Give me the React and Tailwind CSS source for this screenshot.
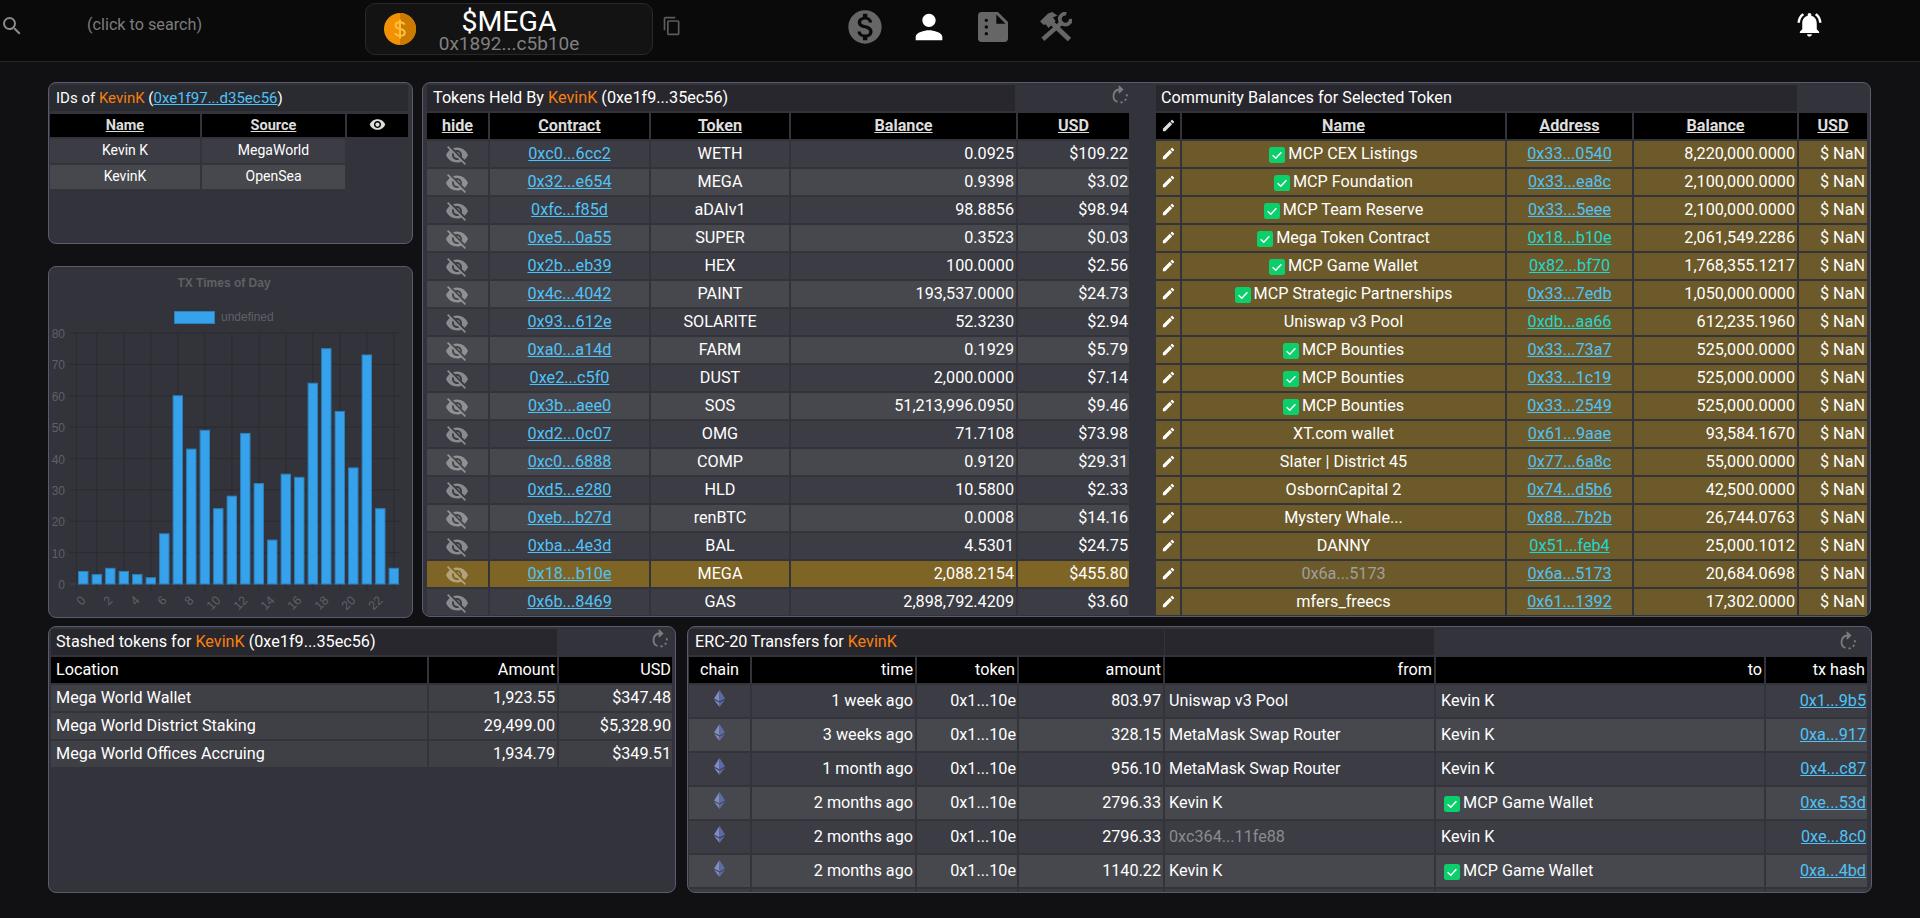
import {
  MdContentCopy,
  MdEdit,
  MdMonetizationOn,
  MdNotificationsActive,
  MdPerson,
  MdSearch,
  MdSummarize,
  MdVisibility,
  MdVisibilityOff,
} from "react-icons/md";

const tokens = [
  ["0xc0...6cc2", "WETH", "0.0925", "$109.22"],
  ["0x32...e654", "MEGA", "0.9398", "$3.02"],
  ["0xfc...f85d", "aDAIv1", "98.8856", "$98.94"],
  ["0xe5...0a55", "SUPER", "0.3523", "$0.03"],
  ["0x2b...eb39", "HEX", "100.0000", "$2.56"],
  ["0x4c...4042", "PAINT", "193,537.0000", "$24.73"],
  ["0x93...612e", "SOLARITE", "52.3230", "$2.94"],
  ["0xa0...a14d", "FARM", "0.1929", "$5.79"],
  ["0xe2...c5f0", "DUST", "2,000.0000", "$7.14"],
  ["0x3b...aee0", "SOS", "51,213,996.0950", "$9.46"],
  ["0xd2...0c07", "OMG", "71.7108", "$73.98"],
  ["0xc0...6888", "COMP", "0.9120", "$29.31"],
  ["0xd5...e280", "HLD", "10.5800", "$2.33"],
  ["0xeb...b27d", "renBTC", "0.0008", "$14.16"],
  ["0xba...4e3d", "BAL", "4.5301", "$24.75"],
  ["0x18...b10e", "MEGA", "2,088.2154", "$455.80", true],
  ["0x6b...8469", "GAS", "2,898,792.4209", "$3.60"],
];

const community = [
  { name: "MCP CEX Listings", ok: true, addr: "0x33...0540", bal: "8,220,000.0000" },
  { name: "MCP Foundation", ok: true, addr: "0x33...ea8c", bal: "2,100,000.0000" },
  { name: "MCP Team Reserve", ok: true, addr: "0x33...5eee", bal: "2,100,000.0000" },
  { name: "Mega Token Contract", ok: true, addr: "0x18...b10e", bal: "2,061,549.2286", teal: true },
  { name: "MCP Game Wallet", ok: true, addr: "0x82...bf70", bal: "1,768,355.1217", teal: true },
  { name: "MCP Strategic Partnerships", ok: true, addr: "0x33...7edb", bal: "1,050,000.0000" },
  { name: "Uniswap v3 Pool", addr: "0xdb...aa66", bal: "612,235.1960", teal: true },
  { name: "MCP Bounties", ok: true, addr: "0x33...73a7", bal: "525,000.0000" },
  { name: "MCP Bounties", ok: true, addr: "0x33...1c19", bal: "525,000.0000" },
  { name: "MCP Bounties", ok: true, addr: "0x33...2549", bal: "525,000.0000" },
  { name: "XT.com wallet", addr: "0x61...9aae", bal: "93,584.1670" },
  { name: "Slater | District 45", addr: "0x77...6a8c", bal: "55,000.0000" },
  { name: "OsbornCapital 2", addr: "0x74...d5b6", bal: "42,500.0000" },
  { name: "Mystery Whale...", addr: "0x88...7b2b", bal: "26,744.0763" },
  { name: "DANNY", addr: "0x51...feb4", bal: "25,000.1012", teal: true },
  { name: "0x6a...5173", dim: true, addr: "0x6a...5173", bal: "20,684.0698" },
  { name: "mfers_freecs", addr: "0x61...1392", bal: "17,302.0000" },
];

const stash = [
  ["Mega World Wallet", "1,923.55", "$347.48"],
  ["Mega World District Staking", "29,499.00", "$5,328.90"],
  ["Mega World Offices Accruing", "1,934.79", "$349.51"],
];

const transfers = [
  ["1 week ago", "803.97", "Uniswap v3 Pool", "Kevin K", "0x1...9b5"],
  ["3 weeks ago", "328.15", "MetaMask Swap Router", "Kevin K", "0xa...917"],
  ["1 month ago", "956.10", "MetaMask Swap Router", "Kevin K", "0x4...c87"],
  ["2 months ago", "2796.33", "Kevin K", "MCP Game Wallet", "0xe...53d"],
  ["2 months ago", "2796.33", "0xc364...11fe88", "Kevin K", "0xe...8c0"],
  ["2 months ago", "1140.22", "Kevin K", "MCP Game Wallet", "0xa...4bd"],
];

const hours = [4, 3, 5, 4, 3, 2, 16, 60, 43, 49, 24, 28, 48, 32, 14, 35, 34, 64, 75, 55, 37, 73, 24, 5];

const tokenCols = "grid grid-cols-[61px_159px_138px_225px_111px] gap-x-[2px]";
const communityCols = "grid grid-cols-[24px_323px_125px_163px_68px] gap-x-[2px]";
const idCols = "grid grid-cols-[150px_143px_61px] gap-x-[2px]";
const stashCols = "grid grid-cols-[376px_128px_113px] gap-x-[2px]";
const transferCols = "grid grid-cols-[61px_163px_100px_144px_269px_328px_101px] gap-x-[2px]";

const rowBg = (i) => (i % 2 === 0 ? "bg-[#3b3c44]" : "bg-[#47484d]");

function Cell({ className = "", children }) {
  return <div className={`flex items-center overflow-hidden whitespace-nowrap pt-[1px] ${className}`}>{children}</div>;
}

function Addr({ teal, children }) {
  return <a className={`underline ${teal ? "text-[#22d6cf]" : "text-[#4fc3f7]"}`}>{children}</a>;
}

function Name({ children }) {
  return <span className="text-[#f97f0f]">{children}</span>;
}

function Panel({ className = "", children }) {
  return (
    <section className={`overflow-hidden rounded-[8px] border border-[#5a5b70] bg-[#32333b] ${className}`}>
      {children}
    </section>
  );
}

function Verified({ className = "" }) {
  return (
    <svg viewBox="0 0 16 16" className={`mr-[3px] h-[16px] w-[16px] shrink-0 ${className}`}>
      <rect width="16" height="16" rx="2.5" fill="#0bcf6b" />
      <path d="M3.6 8.2 6.8 11.2 12.4 5.2" fill="none" stroke="#fff" strokeWidth="1.5" />
    </svg>
  );
}

function RefreshIcon({ className = "" }) {
  return (
    <svg viewBox="0 0 18 20" className={`h-[20px] w-[18px] ${className}`} fill="none" stroke="#7b7b80" strokeWidth="1.8">
      <path d="M9 4.5A6.5 6.5 0 0 0 6.5 17" />
      <path d="M7.8 1 11.4 4.4 7.8 7.8" strokeWidth="1.6" fill="#7b7b80" />
      <path d="M9.5 17.5A6.5 6.5 0 0 0 14.5 7" strokeDasharray="2.2 2.6" />
    </svg>
  );
}

function EthIcon() {
  return (
    <svg viewBox="0 0 11 17" className="mb-[6px] h-[17px] w-[11px]">
      <polygon points="5.5,0 0,8.6 5.5,11.4" fill="#7e8bc4" />
      <polygon points="5.5,0 11,8.6 5.5,11.4" fill="#5d6aa8" />
      <polygon points="0,9.8 5.5,17 5.5,12.8" fill="#7e8bc4" />
      <polygon points="11,9.8 5.5,17 5.5,12.8" fill="#5d6aa8" />
    </svg>
  );
}

function ToolsIcon() {
  return (
    <svg viewBox="0 0 92 84" className="mb-[6px] ml-[3px] mt-[5px] h-[29px] w-[32px]" fill="none" stroke="#666">
      <path d="M32 30 85 80" strokeWidth="14" />
      <path d="M66 28 8 79" strokeWidth="13" />
      <path d="M0 27 23 4 35 0 50 10 37 16 45 26 24 46 17 36 9 37z" fill="#666" stroke="none" />
      <path d="M76 5A16 16 0 1 0 89 20" strokeWidth="11" />
    </svg>
  );
}

function Coin() {
  return (
    <svg viewBox="0 0 32 32" className="h-[32px] w-[32px] shrink-0">
      <circle cx="16" cy="16" r="16" fill="#f39200" />
      <path d="M16 0a16 16 0 0 1 0 32z" fill="#cc7a00" />
      <path
        d="M20.6 11.6c-.7-1.6-2.4-2.4-4.6-2.4-2.6 0-4.5 1.3-4.5 3.3 0 4.8 9.3 2.4 9.3 7 0 2-2 3.3-4.8 3.3-2.3 0-4.2-1-4.8-2.8M16 6.5v19"
        fill="none"
        stroke="#ffbf3c"
        strokeWidth="2"
      />
    </svg>
  );
}

function Chart() {
  const x = (i) => 34.3 + 13.5 * i;
  const y = (v) => 317 - v * 3.1375;
  return (
    <svg width="363" height="350" className="block font-['Liberation_Sans',sans-serif]">
      <text x="175" y="20" textAnchor="middle" fontSize="12" fontWeight="700" fill="#5f6065">
        TX Times of Day
      </text>
      <rect x="125.5" y="44.5" width="40" height="12" fill="#36a2eb" stroke="#2d7fb8" />
      <text x="172" y="54" fontSize="12" fill="#5f6065">
        undefined
      </text>
      {[0, 10, 20, 30, 40, 50, 60, 70, 80].map((v) => (
        <g key={v}>
          <line x1="20" x2="351" y1={y(v)} y2={y(v)} stroke={v === 0 ? "#45464c" : "#2b2c31"} />
          <text x="16" y={y(v) + 5} textAnchor="end" fontSize="12" fill="#5f6065">
            {v}
          </text>
        </g>
      ))}
      <line x1="27.5" x2="27.5" y1="66" y2="323" stroke="#2b2c31" />
      {hours.map((v, i) =>
        i % 2 === 1 ? <line key={i} x1={x(i)} x2={x(i)} y1="66" y2="323" stroke="#2b2c31" /> : null
      )}
      {hours.map((v, i) => (
        <rect key={i} x={x(i) - 4.7} y={y(v)} width="9.4" height={317 - y(v)} fill="#36a2eb" stroke="#2d7fb8" />
      ))}
      {hours.map((v, i) =>
        i % 2 === 0 ? (
          <text
            key={i}
            transform={`translate(${x(i) + 3} 334) rotate(-45)`}
            textAnchor="end"
            fontSize="12.5"
            fill="#5f6065"
          >
            {i}
          </text>
        ) : null
      )}
    </svg>
  );
}

function Header() {
  return (
    <header className="flex h-[62px] items-center border-b border-[#25252a] bg-[#0a0a0b]">
      <div className="w-[87px] text-[#8a8a8a]">
        <MdSearch size={24} className="mb-[10px]" />
      </div>
      <div className="w-[278px] pb-[10px] text-[16.2px] text-[#7c7c7c]">(click to search)</div>
      <div className="mb-[3px] flex h-[52px] w-[288px] items-center rounded-[10px] border border-[#29292c] bg-[#131314] pl-[18px]">
        <Coin />
        <div className="flex w-[186px] flex-col items-center pt-[3px]">
          <div className="text-[28.5px] leading-[27px] text-white">$MEGA</div>
          <div className="text-[19px] leading-[18px] text-[#808080]">0x1892...c5b10e</div>
        </div>
      </div>
      <MdContentCopy size={20} className="mb-[10px] ml-[9px] text-[#5c5c5c]" />
      <nav className="mb-[8px] ml-[163px] flex gap-[24px] text-[#666]">
        <MdMonetizationOn size={40} />
        <MdPerson size={40} className="text-white" />
        <MdSummarize size={40} />
        <ToolsIcon />
      </nav>
      <MdNotificationsActive size={29} className="mb-[12px] ml-[723px] text-white" />
    </header>
  );
}

function IdsPanel() {
  const rows = [
    ["Kevin K", "MegaWorld"],
    ["KevinK", "OpenSea"],
  ];
  return (
    <Panel className="h-[162px] px-[1px] pt-[2px]">
      <div className="flex h-[26px] w-[358px] items-center bg-[#2a2a31] pl-[6px] pt-[1px] text-[15px] text-white">
        IDs of&nbsp;<Name>KevinK</Name>&nbsp;(<Addr>0xe1f97...d35ec56</Addr>)
      </div>
      <div className={`${idCols} mt-[3px] h-[23px] text-[14.5px] font-bold text-[#ddd] [&>div]:bg-black`}>
        <Cell className="justify-center underline">Name</Cell>
        <Cell className="justify-center underline">Source</Cell>
        <Cell className="justify-center pb-[4px]">
          <MdVisibility size={17} />
        </Cell>
      </div>
      {rows.map((r, i) => (
        <div key={r[0]} className={`${idCols} mt-[2px] h-[24px] text-[14px] text-white [&>div]:pb-[2px]`}>
          <Cell className={`justify-center ${rowBg(i)}`}>{r[0]}</Cell>
          <Cell className={`justify-center ${rowBg(i)}`}>{r[1]}</Cell>
        </div>
      ))}
    </Panel>
  );
}

function TokensTable() {
  const head = "justify-center bg-black font-bold text-[#ddd] underline";
  return (
    <div className="w-[702px]">
      <div className="flex h-[26px]">
        <div className="flex w-[588px] items-center bg-[#27272d] pl-[6px] pt-[1px]">
          Tokens Held By&nbsp;<Name>KevinK</Name>&nbsp;(0xe1f9...35ec56)
        </div>
        <RefreshIcon className="ml-[96px]" />
      </div>
      <div className={`${tokenCols} mt-[2px] h-[26px]`}>
        <Cell className={head}>hide</Cell>
        <Cell className={head}>Contract</Cell>
        <Cell className={head}>Token</Cell>
        <Cell className={head}>Balance</Cell>
        <Cell className={head}>USD</Cell>
      </div>
      {tokens.map((t, i) => {
        const bg = t[4] ? "bg-[#7e6525]" : rowBg(i);
        return (
          <div key={t[0] + i} className={`${tokenCols} mt-[2px] h-[26px]`}>
            <Cell className={`justify-center ${bg}`}>
              <MdVisibilityOff size={24} className="mr-[1px] text-white opacity-40" />
            </Cell>
            <Cell className={`justify-center ${bg}`}>
              <Addr>{t[0]}</Addr>
            </Cell>
            <Cell className={`justify-center ${bg}`}>{t[1]}</Cell>
            <Cell className={`justify-end pr-[2px] ${bg}`}>{t[2]}</Cell>
            <Cell className={`justify-end pr-[1px] ${bg}`}>{t[3]}</Cell>
          </div>
        );
      })}
    </div>
  );
}

function CommunityTable() {
  const head = "justify-center bg-black font-bold text-[#ddd] underline";
  const gold = "bg-[#6c5a2a]";
  return (
    <div className="ml-[27px] w-[711px]">
      <div className="flex h-[26px] w-[641px] items-center bg-[#27272d] pl-[5px] pt-[1px]">
        Community Balances for Selected Token
      </div>
      <div className={`${communityCols} mt-[2px] h-[26px]`}>
        <Cell className={head}>
          <MdEdit size={15} className="mb-[3px] text-[#ddd]" />
        </Cell>
        <Cell className={head}>Name</Cell>
        <Cell className={head}>Address</Cell>
        <Cell className={head}>Balance</Cell>
        <Cell className={head}>USD</Cell>
      </div>
      {community.map((c, i) => (
        <div key={c.addr + i} className={`${communityCols} mt-[2px] h-[26px]`}>
          <Cell className={`justify-center ${gold}`}>
            <MdEdit size={15} className="mb-[3px] text-white" />
          </Cell>
          <Cell className={`justify-center ${gold} ${c.dim ? "text-[#a09f9b]" : ""}`}>
            {c.ok && <Verified />}
            {c.name}
          </Cell>
          <Cell className={`justify-center ${gold}`}>
            <Addr teal={c.teal}>{c.addr}</Addr>
          </Cell>
          <Cell className={`justify-end pr-[2px] ${gold}`}>{c.bal}</Cell>
          <Cell className={`justify-end pr-[2px] ${gold}`}>$ NaN</Cell>
        </div>
      ))}
    </div>
  );
}

function StashPanel() {
  const head = "bg-black text-white";
  return (
    <Panel className="h-[267px] w-[628px] px-[2px] pt-[2px]">
      <div className="flex h-[26px]">
        <div className="flex w-[506px] items-center bg-[#27272d] pl-[5px] pt-[1px]">
          Stashed tokens for&nbsp;<Name>KevinK</Name>&nbsp;(0xe1f9...35ec56)
        </div>
        <RefreshIcon className="ml-[94px]" />
      </div>
      <div className={`${stashCols} mt-[2px] h-[26px]`}>
        <Cell className={`pl-[5px] ${head}`}>Location</Cell>
        <Cell className={`justify-end pr-[2px] ${head}`}>Amount</Cell>
        <Cell className={`justify-end pr-[1px] ${head}`}>USD</Cell>
      </div>
      {stash.map((s) => (
        <div key={s[0]} className={`${stashCols} mt-[2px] h-[26px]`}>
          <Cell className="bg-[#3f4046] pl-[5px]">{s[0]}</Cell>
          <Cell className="justify-end bg-[#3f4046] pr-[2px]">{s[1]}</Cell>
          <Cell className="justify-end bg-[#3f4046] pr-[1px]">{s[2]}</Cell>
        </div>
      ))}
    </Panel>
  );
}

function TransfersPanel() {
  const head = "justify-end bg-black pr-[2px] text-white";
  return (
    <Panel className="h-[267px] w-[1185px] px-[1px] pt-[2px]">
      <div className="flex h-[26px]">
        <div className="flex w-[475px] items-center bg-[#27272d] pl-[6px] pt-[1px]">
          ERC-20 Transfers for&nbsp;<Name>KevinK</Name>
        </div>
        <div className="ml-[1px] w-[269px] bg-[#27272d]" />
        <RefreshIcon className="ml-[405px] mt-[2px]" />
      </div>
      <div className={`${transferCols} mt-[2px] h-[26px]`}>
        <Cell className="justify-center bg-black text-white">chain</Cell>
        <Cell className={head}>time</Cell>
        <Cell className={head}>token</Cell>
        <Cell className={head}>amount</Cell>
        <Cell className={head}>from</Cell>
        <Cell className={head}>to</Cell>
        <Cell className={head}>tx hash</Cell>
      </div>
      {transfers.map((t, i) => {
        const bg = rowBg(i);
        return (
          <div key={t[4]} className={`${transferCols} mt-[2px] h-[32px]`}>
            <Cell className={`justify-center ${bg}`}>
              <EthIcon />
            </Cell>
            <Cell className={`justify-end pr-[2px] ${bg}`}>{t[0]}</Cell>
            <Cell className={`justify-end pr-[1px] ${bg}`}>0x1...10e</Cell>
            <Cell className={`justify-end pr-[2px] ${bg}`}>{t[1]}</Cell>
            <Cell className={`pl-[4px] ${bg} ${t[2].startsWith("0xc") ? "text-[#8b8b8f]" : ""}`}>{t[2]}</Cell>
            <Cell className={`pl-[5px] ${bg}`}>
              {t[3] === "MCP Game Wallet" && <Verified className="ml-[3px]" />}
              {t[3]}
            </Cell>
            <Cell className={`justify-end pr-[1px] ${bg}`}>
              <Addr>{t[4]}</Addr>
            </Cell>
          </div>
        );
      })}
      <div className={`${transferCols} mt-[2px] h-[32px]`}>
        {[0, 1, 2, 3, 4, 5, 6].map((i) => (
          <div key={i} className="bg-[#3b3c44]" />
        ))}
      </div>
    </Panel>
  );
}

export default function App() {
  return (
    <div className="h-[918px] overflow-hidden bg-[#111113] font-['Roboto',sans-serif] text-[16.2px] text-white">
      <Header />
      <main className="flex flex-col gap-[8px] pl-[48px] pt-[20px]">
        <div className="flex h-[536px] items-start gap-[9px]">
          <div className="flex w-[365px] flex-col gap-[22px]">
            <IdsPanel />
            <Panel className="h-[352px]">
              <Chart />
            </Panel>
          </div>
          <Panel className="flex h-[535px] w-[1449px] px-[4px] pt-[2px]">
            <TokensTable />
            <CommunityTable />
          </Panel>
        </div>
        <div className="flex gap-[11px]">
          <StashPanel />
          <TransfersPanel />
        </div>
      </main>
    </div>
  );
}
